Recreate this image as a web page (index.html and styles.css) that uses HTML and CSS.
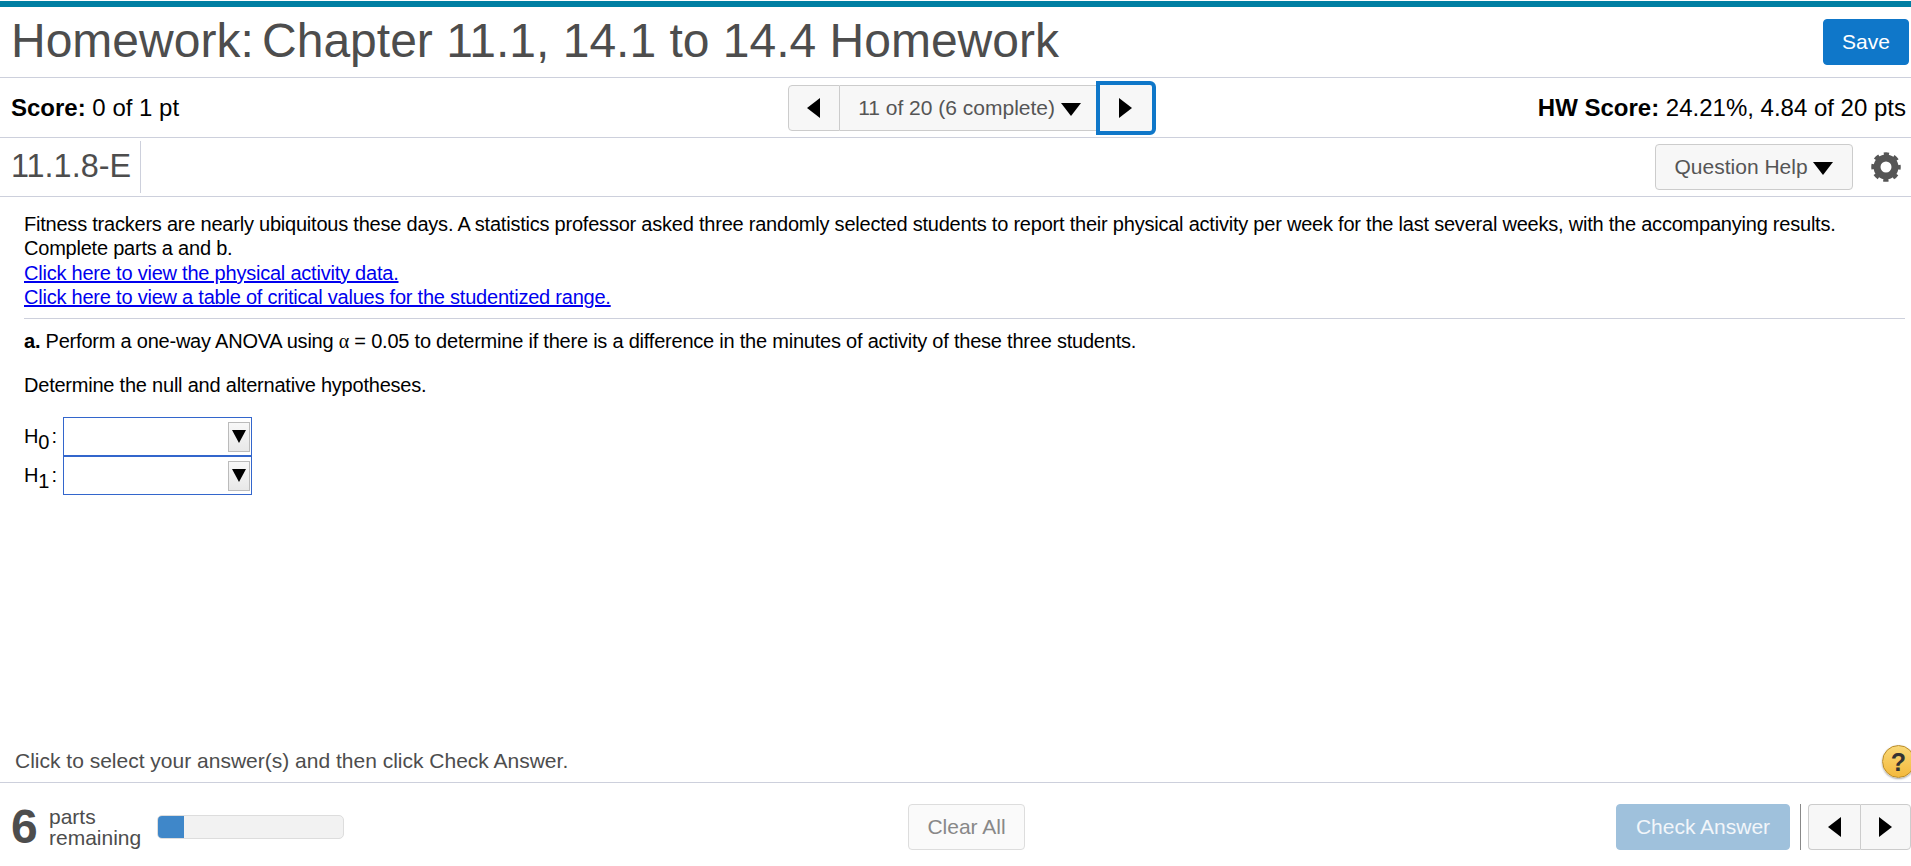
FILE: index.html
```html
<!DOCTYPE html>
<html lang="en">
<head>
    <meta charset="UTF-8">
    <meta name="viewport" content="width=device-width, initial-scale=1.0">
    <title>Homework: Chapter 11.1, 14.1 to 14.4 Homework</title>
    <link rel="stylesheet" href="styles.css">
</head>
<body>
    <header class="title-bar">
        <h1><span class="title-prefix">Homework:</span> Chapter 11.1, 14.1 to 14.4 Homework</h1>
        <button class="btn btn-save">Save</button>
    </header>
    <div class="score-bar">
        <div class="score"><b>Score:</b> 0 of 1 pt</div>
        <div class="pager">
            <button class="pager-btn pager-prev"><span class="tri tri-left"></span></button>
            <button class="pager-label">11 of 20 (6 complete) <span class="tri tri-down"></span></button>
            <button class="pager-btn pager-next"><span class="tri tri-right"></span></button>
        </div>
        <div class="score hw-score"><b>HW Score:</b> 24.21%, 4.84 of 20 pts</div>
    </div>
    <div class="question-bar">
        <div class="question-id">11.1.8-E</div>
        <div class="question-tools">
            <button class="btn btn-help">Question Help <span class="tri tri-down"></span></button>
            <svg class="gear" viewBox="0 0 30 30" width="30" height="30">
                <circle class="gear-body" cx="15" cy="15" r="9"/>
                <circle class="gear-teeth" cx="15" cy="15" r="12.5"/>
            </svg>
        </div>
    </div>
    <main class="content">
        <div class="question-text">
            <p>Fitness trackers are nearly ubiquitous these days. A statistics professor asked three randomly selected students to report their physical activity per week for the last several weeks, with the accompanying results.</p>
            <p>Complete parts a and b.</p>
            <p><a href="#">Click here to view the physical activity data.</a></p>
            <p><a href="#">Click here to view a table of critical values for the studentized range.</a></p>
        </div>
        <div class="part">
            <p class="part-line"><b>a.</b> Perform a one-way ANOVA using <span class="greek">α</span> = 0.05 to determine if there is a difference in the minutes of activity of these three students.</p>
            <p class="part-line">Determine the null and alternative hypotheses.</p>
            <div class="hypotheses">
                <div class="hypothesis">
                    <span class="hyp-label">H<sub>0</sub> :</span>
                    <div class="answer-box"><span class="answer-arrow"><span class="tri tri-small"></span></span></div>
                </div>
                <div class="hypothesis">
                    <span class="hyp-label">H<sub>1</sub> :</span>
                    <div class="answer-box"><span class="answer-arrow"><span class="tri tri-small"></span></span></div>
                </div>
            </div>
        </div>
        <div class="instruction">Click to select your answer(s) and then click Check Answer.</div>
        <div class="help-badge">?</div>
    </main>
    <footer class="footer">
        <div class="parts">
            <span class="parts-count">6</span>
            <span class="parts-label">parts<br>remaining</span>
            <div class="progress"><div class="progress-fill"></div></div>
        </div>
        <button class="btn btn-clear">Clear All</button>
        <div class="footer-right">
            <button class="btn btn-check">Check Answer</button>
            <div class="footer-nav">
                <button class="pager-btn"><span class="tri tri-left"></span></button>
                <button class="pager-btn"><span class="tri tri-right"></span></button>
            </div>
        </div>
    </footer>
</body>
</html>
```

FILE: styles.css
```css
* { margin: 0; padding: 0; box-sizing: border-box; }
html, body { height: 100%; }
body {
    font-family: 'Liberation Sans', Arial, sans-serif;
    background: #fff;
    color: #000;
    overflow: hidden;
    display: flex;
    flex-direction: column;
    height: 866px;
}
button { font-family: inherit; cursor: pointer; }
.tri {
    display: inline-block;
    width: 0;
    height: 0;
    border-style: solid;
    border-color: transparent;
}
.tri-left { border-width: 10.5px 13px 10.5px 0; border-right-color: #000; }
.tri-right { border-width: 10.5px 0 10.5px 13px; border-left-color: #000; }
.tri-down { border-width: 13px 10.5px 0; border-top-color: #000; vertical-align: -1px; }
.tri-small { border-width: 13px 7px 0; border-top-color: #000; }

.title-bar {
    height: 77px;
    margin-top: 1px;
    border-top: 6px solid #007fa3;
    border-bottom: 1px solid #cdd0dc;
    padding: 0 2px 0 11px;
    display: flex;
    justify-content: space-between;
    align-items: center;
    flex-shrink: 0;
}
h1 {
    font-size: 48px;
    font-weight: 400;
    color: #4d4d4d;
    margin-bottom: 3px;
}
.title-prefix { margin-right: -5px; }
.btn {
    border-radius: 4px;
    font-size: 21px;
    height: 46px;
    border: 1px solid #ccc;
    background: #f7f7f7;
    color: #555;
}
.btn-save {
    width: 86px;
    background: #0f77c9;
    border-color: #0f77c9;
    color: #fff;
}
.score-bar {
    height: 60px;
    border-bottom: 1px solid #cdd0dc;
    padding: 0 5px 0 11px;
    display: flex;
    justify-content: space-between;
    align-items: center;
    flex-shrink: 0;
}
.score { font-size: 24px; width: 400px; white-space: nowrap; }
.hw-score { text-align: right; width: 374px; }
.pager { display: flex; height: 46px; width: 368px; align-items: stretch; }
.pager-btn {
    width: 52px;
    background: #f7f7f7;
    border: 1px solid #ccc;
    display: flex;
    align-items: center;
    justify-content: center;
}
.pager-prev { border-radius: 4px 0 0 4px; }
.pager-label {
    flex: 1;
    background: #f7f7f7;
    border: 1px solid #ccc;
    border-width: 1px 0;
    padding-left: 4px;
    font-size: 21px;
    color: #555;
}
.pager-next {
    width: 60px;
    height: 54px;
    margin-top: -4px;
    border: 4px solid #0f77c9;
    border-radius: 0 6px 6px 0;
}
.question-bar {
    height: 59px;
    border-bottom: 1px solid #cdd0dc;
    padding: 0 10px 0 11px;
    display: flex;
    justify-content: space-between;
    align-items: center;
    flex-shrink: 0;
}
.question-id {
    font-size: 32.4px;
    color: #4d4d4d;
    height: 52px;
    line-height: 50px;
    padding-right: 9px;
    border-right: 1px solid #cdd0dc;
}
.question-tools { display: flex; align-items: center; gap: 18px; }
.btn-help { width: 198px; }
.gear-body { fill: none; stroke: #555; stroke-width: 7; }
.gear-teeth { fill: none; stroke: #555; stroke-width: 4.5; stroke-dasharray: 5 4.82; stroke-dashoffset: 2.5; }

.content {
    flex: 1;
    min-height: 0;
    position: relative;
    padding: 15px 6px 0 24px;
    display: flex;
    flex-direction: column;
    font-size: 20px;
    letter-spacing: -0.22px;
}
.question-text { line-height: 24.3px; padding-bottom: 9px; border-bottom: 1px solid #cdd0dc; }
.question-text a { color: #0000ee; }
.part { padding-top: 10px; }
.part-line { line-height: 24px; margin-bottom: 20px; }
.greek { font-family: 'Liberation Serif', serif; }
.hypotheses { display: flex; flex-direction: column; }
.hypothesis { display: flex; align-items: center; height: 39px; }
.hyp-label { width: 39px; font-size: 20px; word-spacing: -3px; }
.hyp-label sub { font-size: 20px; line-height: 0; vertical-align: -6px; }
.answer-box {
    width: 189px;
    height: 39px;
    border: 1px solid #3366cc;
    display: flex;
    align-items: center;
    justify-content: flex-end;
    padding-right: 1px;
}
.answer-arrow {
    width: 22px;
    height: 30px;
    background: linear-gradient(#f8f8f8, #e8e8e8);
    border: 1px solid #bbb;
    display: flex;
    align-items: center;
    justify-content: center;
}
.instruction {
    margin-top: auto;
    margin-left: -9px;
    padding-bottom: 9px;
    font-size: 21px;
    letter-spacing: 0;
    color: #4d4d4d;
}
.help-badge {
    position: absolute;
    right: -4px;
    bottom: 4px;
    width: 33px;
    height: 33px;
    border-radius: 50%;
    background: linear-gradient(#f9d877, #f4b93c);
    border: 1px solid #b98a25;
    box-shadow: 0 1px 2px rgba(0, 0, 0, 0.35);
    font-size: 25px;
    font-weight: 700;
    letter-spacing: 0;
    color: #333;
    text-align: center;
    line-height: 32px;
}
.footer {
    height: 84px;
    border-top: 1px solid #cdd0dc;
    padding: 21px 0 0 11px;
    display: flex;
    flex-shrink: 0;
}
.parts { display: flex; align-items: flex-start; width: 897px; }
.parts-count { font-size: 48px; font-weight: 700; color: #4d4d4d; line-height: 46px; width: 38px; }
.parts-label { font-size: 21px; line-height: 21px; color: #4d4d4d; width: 108px; margin-top: 2px; }
.progress {
    width: 187px;
    height: 24px;
    margin-top: 11px;
    background: #f2f2f2;
    border-radius: 5px;
    border: 1px solid #ddd;
    overflow: hidden;
}
.progress-fill { width: 26px; height: 100%; background: #3f87c9; }
.btn-clear {
    width: 117px;
    background: #fafafa;
    border-color: #ddd;
    color: #888;
}
.footer-right { margin-left: auto; display: flex; }
.btn-check {
    width: 174px;
    background: #9fc1dc;
    border-color: #9fc1dc;
    color: #f2f6fa;
}
.footer-nav {
    margin-left: 10px;
    padding-left: 7px;
    border-left: 1px solid #888;
    display: flex;
    height: 46px;
}
.footer-nav .pager-btn { width: 51.5px; }
.footer-nav .pager-btn:first-child { border-radius: 4px 0 0 4px; border-right: 0; }
.footer-nav .pager-btn:last-child { border-radius: 0 4px 4px 0; }
```
